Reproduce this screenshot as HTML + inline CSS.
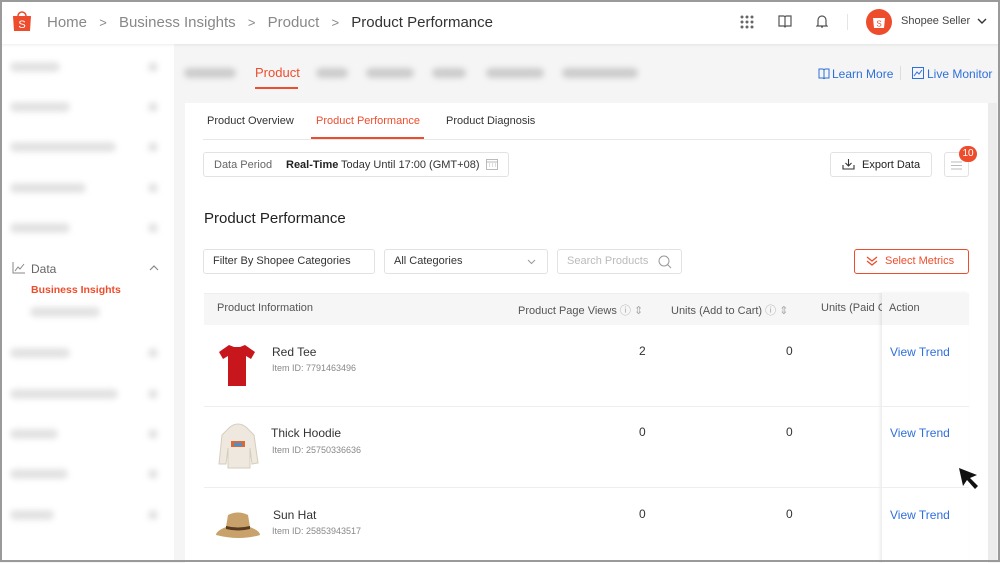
<!DOCTYPE html>
<html><head><meta charset="utf-8"><style>
*{box-sizing:border-box;margin:0;padding:0}
body{width:1000px;height:562px;overflow:hidden;font-family:"Liberation Sans",Arial,sans-serif;background:#f5f5f5;position:relative;color:#333}
.frame{position:absolute;inset:0;border:2px solid #9a9a9a;z-index:50;pointer-events:none}
.hdr{position:absolute;left:0;top:0;width:1000px;height:44px;background:#fff;box-shadow:0 1px 3px rgba(0,0,0,.08);z-index:5}
.a{position:absolute;white-space:nowrap}
.side{position:absolute;left:0;top:44px;width:174px;height:518px;background:#fff}
.blur{position:absolute;height:10px;background:#e3e3e3;border-radius:5px;filter:blur(3px)}
.card{position:absolute;left:185px;top:103px;width:803px;height:460px;background:#fff}
.box{position:absolute;border:1px solid #e2e2e2;border-radius:3px;background:#fff}
.td{position:absolute;font-size:12px;color:#333}
.link{color:#2f6fdb;font-size:12px}
</style></head><body>
<div class="hdr">
 <svg class="a" style="left:12px;top:10px" width="20" height="22" viewBox="0 0 20 22"><path d="M1 6h18l-1 15H2z" fill="#ee4d2d"/><path d="M6 6a4 4 0 0 1 8 0" stroke="#ee4d2d" stroke-width="1.6" fill="none"/><text x="10" y="18" font-size="11" fill="#fff" text-anchor="middle" font-family="Liberation Sans">S</text></svg>
 <div class="a" style="left:47px;top:14px;font-size:15px;color:#888">Home <span style="margin:0 8px;font-size:13px">&gt;</span> Business Insights <span style="margin:0 8px;font-size:13px">&gt;</span> Product <span style="margin:0 8px;font-size:13px">&gt;</span> <span style="color:#333">Product Performance</span></div>
 <svg class="a" style="left:740px;top:15px" width="14" height="14"><g fill="#666"><circle cx="2" cy="2" r="1.5"/><circle cx="7" cy="2" r="1.5"/><circle cx="12" cy="2" r="1.5"/><circle cx="2" cy="7" r="1.5"/><circle cx="7" cy="7" r="1.5"/><circle cx="12" cy="7" r="1.5"/><circle cx="2" cy="12" r="1.5"/><circle cx="7" cy="12" r="1.5"/><circle cx="12" cy="12" r="1.5"/></g></svg>
 <svg class="a" style="left:778px;top:15px" width="14" height="13"><path d="M1 1h5l1 1 1-1h5v10H8l-1 1-1-1H1zM7 2v10" stroke="#555" stroke-width="1.2" fill="none"/></svg>
 <svg class="a" style="left:816px;top:14px" width="12" height="15"><path d="M2 11V6a4 4 0 0 1 8 0v5l1 1H1zM5 13h2" stroke="#555" stroke-width="1.2" fill="none"/></svg>
 <div class="a" style="left:847px;top:14px;width:1px;height:16px;background:#e5e5e5"></div>
 <div class="a" style="left:866px;top:9px;width:26px;height:26px;border-radius:50%;background:#ee4d2d"></div>
 <svg class="a" style="left:872px;top:14px" width="14" height="15"><path d="M1 4h12l-1 10H2z" fill="#fff"/><text x="7" y="12.5" font-size="8" fill="#ee4d2d" text-anchor="middle">S</text></svg>
 <div class="a" style="left:901px;top:15px;font-size:11px;color:#444">Shopee Seller</div>
 <svg class="a" style="left:977px;top:18px" width="10" height="7"><path d="M1 1l4 4 4-4" stroke="#333" stroke-width="1.4" fill="none"/></svg>
</div>
<div class="side">
 <div class="blur" style="left:10px;top:18px;width:50px"></div><div class="blur" style="left:148px;top:18px;width:10px"></div>
 <div class="blur" style="left:10px;top:58px;width:60px"></div><div class="blur" style="left:148px;top:58px;width:10px"></div>
 <div class="blur" style="left:10px;top:98px;width:106px"></div><div class="blur" style="left:148px;top:98px;width:10px"></div>
 <div class="blur" style="left:10px;top:139px;width:76px"></div><div class="blur" style="left:148px;top:139px;width:10px"></div>
 <div class="blur" style="left:10px;top:179px;width:60px"></div><div class="blur" style="left:148px;top:179px;width:10px"></div>
 <svg class="a" style="left:12px;top:218px" width="13" height="12"><path d="M1 0v11h12M3 9l3-4 2 2 4-5" stroke="#888" stroke-width="1" fill="none"/></svg>
 <div class="a" style="left:31px;top:218px;font-size:12px;color:#666">Data</div>
 <svg class="a" style="left:149px;top:220px" width="10" height="7"><path d="M1 6l4-4 4 4" stroke="#888" stroke-width="1.2" fill="none"/></svg>
 <div class="a" style="left:31px;top:240px;font-size:10.5px;font-weight:bold;color:#ee4d2d">Business Insights</div>
 <div class="blur" style="left:30px;top:263px;width:70px"></div>
 <div class="blur" style="left:10px;top:304px;width:60px"></div><div class="blur" style="left:148px;top:304px;width:10px"></div>
 <div class="blur" style="left:10px;top:345px;width:108px"></div><div class="blur" style="left:148px;top:345px;width:10px"></div>
 <div class="blur" style="left:10px;top:385px;width:48px"></div><div class="blur" style="left:148px;top:385px;width:10px"></div>
 <div class="blur" style="left:10px;top:425px;width:58px"></div><div class="blur" style="left:148px;top:425px;width:10px"></div>
 <div class="blur" style="left:10px;top:466px;width:44px"></div><div class="blur" style="left:148px;top:466px;width:10px"></div>
</div>
<div class="blur" style="left:184px;top:68px;width:52px;background:#ccc"></div>
<div class="a" style="left:255px;top:65px;font-size:13px;color:#ee4d2d">Product</div>
<div class="a" style="left:255px;top:87px;width:43px;height:2px;background:#ee4d2d"></div>
<div class="blur" style="left:316px;top:68px;width:32px;background:#ccc"></div>
<div class="blur" style="left:366px;top:68px;width:48px;background:#ccc"></div>
<div class="blur" style="left:432px;top:68px;width:34px;background:#ccc"></div>
<div class="blur" style="left:486px;top:68px;width:58px;background:#ccc"></div>
<div class="blur" style="left:562px;top:68px;width:76px;background:#ccc"></div>
<svg class="a" style="left:818px;top:68px" width="12" height="11"><path d="M1 1h4l1 1 1-1h4v9H7l-1 1-1-1H1zM6 2v9" stroke="#2f6fdb" stroke-width="1" fill="none"/></svg>
<div class="a link" style="left:832px;top:67px">Learn More</div>
<div class="a" style="left:900px;top:66px;width:1px;height:14px;background:#ddd"></div>
<svg class="a" style="left:912px;top:67px" width="12" height="12"><rect x="0.5" y="0.5" width="11" height="11" stroke="#2f6fdb" fill="none"/><path d="M2 9l3-4 2 2 3-4" stroke="#2f6fdb" fill="none"/></svg>
<div class="a link" style="left:927px;top:67px">Live Monitor</div>
<div class="a" style="left:988px;top:103px;width:9px;height:459px;background:#ececec"></div>
<div class="card">
 <div class="a" style="left:22px;top:12px;font-size:11px;color:#333">Product Overview</div>
 <div class="a" style="left:131px;top:12px;font-size:11px;color:#ee4d2d">Product Performance</div>
 <div class="a" style="left:126px;top:34px;width:113px;height:2px;background:#ee4d2d"></div>
 <div class="a" style="left:261px;top:12px;font-size:11px;color:#333">Product Diagnosis</div>
 <div class="a" style="left:18px;top:36px;width:767px;height:1px;background:#e8e8e8"></div>
 <div class="box" style="left:18px;top:49px;width:306px;height:25px"></div>
 <div class="a" style="left:29px;top:56px;font-size:11px;color:#666">Data Period</div>
 <div class="a" style="left:101px;top:56px;font-size:11px;color:#222;font-weight:bold">Real-Time</div>
 <div class="a" style="left:156px;top:56px;font-size:11px;color:#333">Today Until 17:00 (GMT+08)</div>
 <svg class="a" style="left:301px;top:55px" width="12" height="12"><rect x="0.5" y="1.5" width="11" height="10" stroke="#bbb" fill="none"/><path d="M0 4h12M3 6h1M6 6h1M9 6h1M3 8h1M6 8h1M9 8h1" stroke="#bbb"/></svg>
 <div class="box" style="left:645px;top:49px;width:102px;height:25px"></div>
 <svg class="a" style="left:657px;top:56px" width="13" height="11"><path d="M6.5 0v7M3.5 4l3 3 3-3M1 6v4h11V6" stroke="#333" stroke-width="1.1" fill="none"/></svg>
 <div class="a" style="left:677px;top:56px;font-size:11px;color:#222">Export Data</div>
 <div class="box" style="left:759px;top:49px;width:25px;height:25px"></div>
 <svg class="a" style="left:766px;top:58px" width="11" height="9"><path d="M0 1h11M0 4.5h11M0 8h11" stroke="#bbb"/></svg>
 <div class="a" style="left:774px;top:43px;width:18px;height:16px;border-radius:8px;background:#ee4d2d;color:#fff;font-size:10px;text-align:center;line-height:16px">10</div>
 <div class="a" style="left:19px;top:107px;font-size:15px;color:#222">Product Performance</div>
 <div class="box" style="left:18px;top:146px;width:172px;height:25px"></div>
 <div class="a" style="left:28px;top:152px;font-size:11px;color:#333">Filter By Shopee Categories</div>
 <svg class="a" style="left:351px;top:156px" width="9" height="6"><path d="M1 1l3.5 3.5L8 1" stroke="#999" fill="none"/></svg>
 <div class="box" style="left:199px;top:146px;width:164px;height:25px"></div>
 <div class="a" style="left:209px;top:152px;font-size:11px;color:#333">All Categories</div>
 <svg class="a" style="left:342px;top:156px" width="9" height="6"><path d="M1 1l3.5 3.5L8 1" stroke="#999" fill="none"/></svg>
 <div class="box" style="left:372px;top:146px;width:125px;height:25px"></div>
 <div class="a" style="left:382px;top:152px;font-size:11px;color:#bbb">Search Products</div>
 <svg class="a" style="left:473px;top:152px" width="14" height="14"><circle cx="6" cy="6" r="5" stroke="#999" fill="none"/><path d="M9.5 9.5l3.5 3.5" stroke="#999"/></svg>
 <div class="box" style="left:669px;top:146px;width:115px;height:25px;border-color:#ee4d2d"></div>
 <svg class="a" style="left:681px;top:152px" width="12" height="12"><path d="M1 2l5 4 5-4M1 6l5 4 5-4" stroke="#ee4d2d" stroke-width="1.3" fill="none"/></svg>
 <div class="a" style="left:700px;top:152px;font-size:11px;color:#ee4d2d">Select Metrics</div>
 <div class="a" style="left:19px;top:190px;width:765px;height:32px;background:#f6f6f6;border-top:1px solid #eee"></div>
 <div class="a" style="left:32px;top:199px;font-size:11px;color:#555">Product Information</div>
 <div class="a" style="left:333px;top:199px;font-size:11px;color:#555">Product Page Views <span style="color:#aaa">ⓘ ⇕</span></div>
 <div class="a" style="left:486px;top:199px;font-size:11px;color:#555">Units (Add to Cart) <span style="color:#aaa">ⓘ ⇕</span></div>
 <div class="a" style="left:636px;top:199px;font-size:11px;color:#555">Units (Paid O</div>
 <div class="a" style="left:697px;top:190px;width:87px;height:270px;background:#fff;box-shadow:-2px 0 3px rgba(0,0,0,.08)"></div>
 <div class="a" style="left:697px;top:190px;width:87px;height:32px;background:#f6f6f6"></div>
 <div class="a" style="left:704px;top:199px;font-size:11px;color:#555">Action</div>
 <div class="a" style="left:19px;top:303px;width:765px;height:1px;background:#eee"></div>
 <div class="a" style="left:19px;top:384px;width:765px;height:1px;background:#eee"></div>
 <svg class="a" style="left:34px;top:240px" width="36" height="44"><path d="M10 2l5 2h6l5-2 10 7-4 7-5-3v30H9V13l-5 3-4-7z" fill="#c8161d"/></svg>
 <div class="td" style="left:87px;top:242px">Red Tee</div>
 <div class="td" style="left:87px;top:260px;font-size:9px;color:#888">Item ID: 7791463496</div>
 <div class="td" style="left:454px;top:241px">2</div>
 <div class="td" style="left:601px;top:241px">0</div>
 <div class="a link" style="left:705px;top:242px">View Trend</div>
 <svg class="a" style="left:32px;top:318px" width="42" height="48"><path d="M13 6q8-6 16 0l8 8 4 28-6 1-2-16v20H11V27L9 43H2l3-29z" fill="#eee8de" stroke="#d5cdbd"/><rect x="14" y="20" width="14" height="6" fill="#d66a3a"/><rect x="17" y="22" width="8" height="3" fill="#4a8fcf"/></svg>
 <div class="td" style="left:86px;top:323px">Thick Hoodie</div>
 <div class="td" style="left:87px;top:342px;font-size:9px;color:#888">Item ID: 25750336636</div>
 <div class="td" style="left:454px;top:322px">0</div>
 <div class="td" style="left:601px;top:322px">0</div>
 <div class="a link" style="left:705px;top:323px">View Trend</div>
 <svg class="a" style="left:30px;top:408px" width="46" height="30"><path d="M13 4q10-5 20 0l2 12q10 4 10 8-20 6-44 0 0-4 10-8z" fill="#c8a26a"/><path d="M11 15q12 3 24 0l0 3q-12 3-24 0z" fill="#5a3b22"/></svg>
 <div class="td" style="left:88px;top:405px">Sun Hat</div>
 <div class="td" style="left:87px;top:423px;font-size:9px;color:#888">Item ID: 25853943517</div>
 <div class="td" style="left:454px;top:404px">0</div>
 <div class="td" style="left:601px;top:404px">0</div>
 <div class="a link" style="left:705px;top:405px">View Trend</div>
</div>
<svg class="a" style="left:957px;top:466px;z-index:20" width="24" height="26"><path d="M2 2l4 18 4-6 8 9 3-3-8-8 7-3z" fill="#111"/></svg>
<div class="frame"></div>
</body></html>
